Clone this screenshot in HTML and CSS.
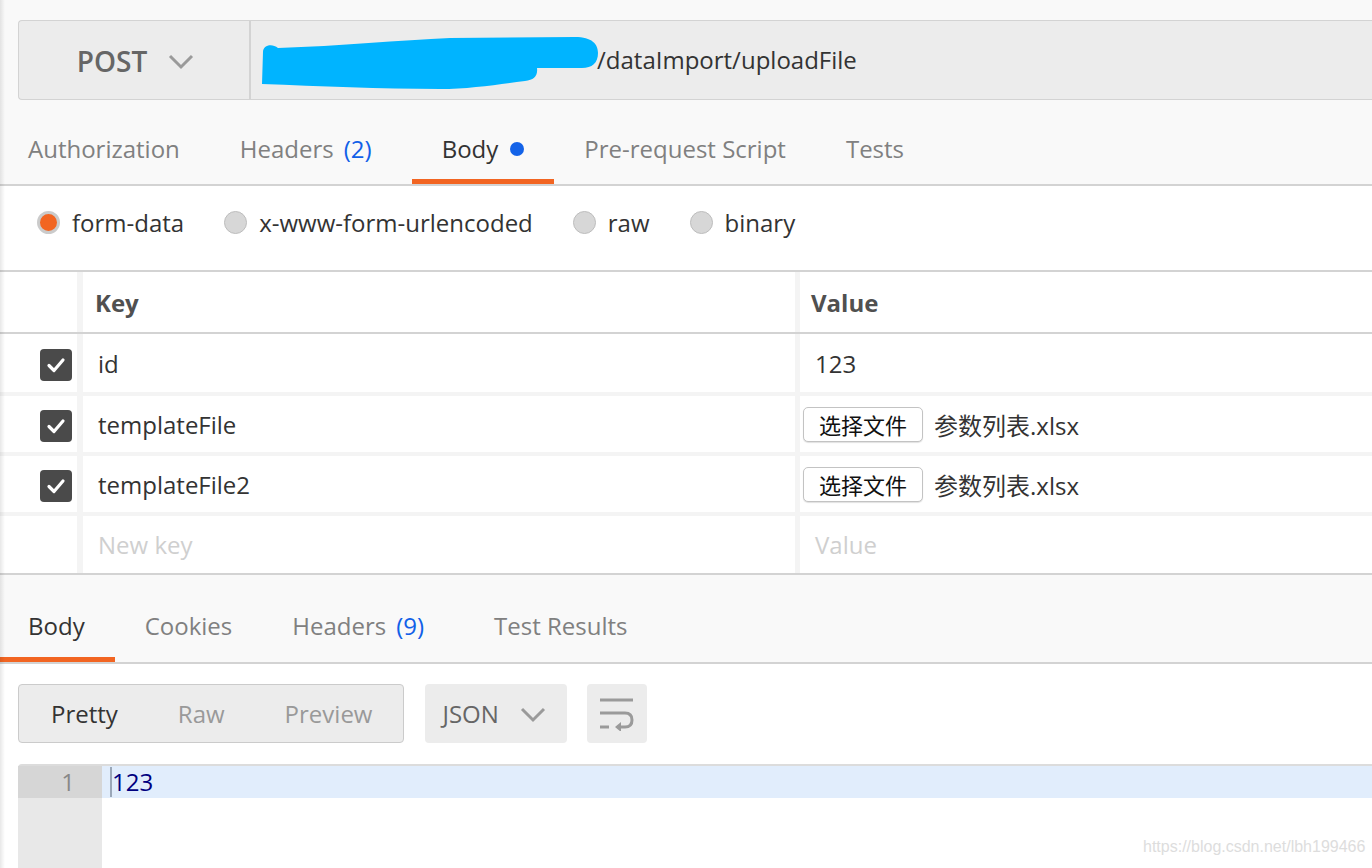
FILE: index.html
```html
<!DOCTYPE html>
<html lang="zh">
<head>
<meta charset="utf-8">
<title>Postman</title>
<link rel="stylesheet" href="styles.css">
</head>
<body>
<div class="app">
  <div class="request-bar">
    <div class="urlbox">
      <div class="method">
        <span class="method-name">POST</span>
        <svg class="chev" width="26" height="16" viewBox="0 0 26 16"><polyline points="2,2 13,13 24,2" fill="none" stroke="#9a9a9a" stroke-width="3"/></svg>
      </div>
      <div class="url">
        <svg class="scribble" width="360" height="78" viewBox="251 21 360 78"><path d="M263 52 C263 45 272 43 278 48 C340 46 400 40 450 38 L575 37 C592 37 598 44 598 53 C598 63 592 68 582 68 L537 68 C538 76 534 80 525 81 C500 84 470 89 440 89 C380 89 320 86 262 84 Z" fill="#00b4ff"/></svg>
        <span class="url-text">/dataImport/uploadFile</span>
      </div>
    </div>
  </div>

  <div class="tabs req-tabs">
    <div class="tab">Authorization</div>
    <div class="tab">Headers<span class="count">(2)</span></div>
    <div class="tab active">Body<span class="dot"></span></div>
    <div class="tab">Pre-request Script</div>
    <div class="tab">Tests</div>
  </div>

  <div class="body-types">
    <label class="opt"><span class="radio checked"></span>form-data</label>
    <label class="opt"><span class="radio"></span>x-www-form-urlencoded</label>
    <label class="opt"><span class="radio"></span>raw</label>
    <label class="opt"><span class="radio"></span>binary</label>
  </div>

  <div class="kv">
    <div class="kv-row kv-head">
      <div class="c-check"></div>
      <div class="c-key">Key</div>
      <div class="c-val">Value</div>
    </div>
    <div class="kv-row">
      <div class="c-check"><span class="cb"><svg width="32" height="32" viewBox="0 0 32 32"><polyline points="9,16.5 14,21.5 23,11" fill="none" stroke="#fff" stroke-width="3.2" stroke-linecap="round" stroke-linejoin="round"/></svg></span></div>
      <div class="c-key">id</div>
      <div class="c-val">123</div>
    </div>
    <div class="kv-row">
      <div class="c-check"><span class="cb"><svg width="32" height="32" viewBox="0 0 32 32"><polyline points="9,16.5 14,21.5 23,11" fill="none" stroke="#fff" stroke-width="3.2" stroke-linecap="round" stroke-linejoin="round"/></svg></span></div>
      <div class="c-key">templateFile</div>
      <div class="c-val file"><span class="file-btn">选择文件</span><span class="file-name">参数列表.xlsx</span></div>
    </div>
    <div class="kv-row">
      <div class="c-check"><span class="cb"><svg width="32" height="32" viewBox="0 0 32 32"><polyline points="9,16.5 14,21.5 23,11" fill="none" stroke="#fff" stroke-width="3.2" stroke-linecap="round" stroke-linejoin="round"/></svg></span></div>
      <div class="c-key">templateFile2</div>
      <div class="c-val file"><span class="file-btn">选择文件</span><span class="file-name">参数列表.xlsx</span></div>
    </div>
    <div class="kv-row last">
      <div class="c-check"></div>
      <div class="c-key placeholder">New key</div>
      <div class="c-val placeholder">Value</div>
    </div>
  </div>

  <div class="tabs resp-tabs">
    <div class="tab active">Body</div>
    <div class="tab">Cookies</div>
    <div class="tab">Headers<span class="count">(9)</span></div>
    <div class="tab">Test Results</div>
  </div>

  <div class="resp-body">
    <div class="toolbar">
      <div class="seg">
        <span class="seg-item on">Pretty</span>
        <span class="seg-item">Raw</span>
        <span class="seg-item">Preview</span>
      </div>
      <div class="select">
        <span>JSON</span>
        <svg width="26" height="16" viewBox="0 0 26 16"><polyline points="2,2 13,13 24,2" fill="none" stroke="#9a9a9a" stroke-width="3"/></svg>
      </div>
      <div class="wrap-btn">
        <svg width="34" height="34" viewBox="0 0 34 34"><g fill="none" stroke="#9a9a9a" stroke-width="3"><path d="M0 3 H33"/><path d="M0 16 H25 C30 16 32 19 32 23 C32 27 30 30 25 30 H18"/><path d="M0 30 H9"/></g><path d="M21 25 L15 30 L21 35 Z" fill="#9a9a9a"/></svg>
      </div>
    </div>
    <div class="editor">
      <div class="gutter"><div class="ln active">1</div></div>
      <div class="code"><div class="line active"><span class="cursor"></span>123</div></div>
    </div>
  </div>

  <div class="watermark">https://blog.csdn.net/lbh199466</div>
</div>
</body>
</html>
```

FILE: styles.css
```css
html, body {
  margin: 0;
  padding: 0;
}
body {
  width: 1372px;
  height: 868px;
  overflow: hidden;
  background: #f9f9f9;
  font-family: "Open Sans", "Noto Sans CJK SC", sans-serif;
  font-size: 24px;
  color: #333;
}
.app {
  position: relative;
  height: 868px;
}
.app::before {
  content: "";
  position: absolute;
  left: 0;
  top: 0;
  bottom: 0;
  width: 5px;
  background: linear-gradient(to right, rgba(0,0,0,0.09), rgba(0,0,0,0));
  z-index: 5;
  pointer-events: none;
}

/* request bar */
.request-bar {
  padding: 20px 0 0 18px;
  height: 100px;
  box-sizing: border-box;
}
.urlbox {
  display: flex;
  height: 80px;
  box-sizing: border-box;
  border: 1px solid #d3d3d3;
  border-right: none;
  border-radius: 4px 0 0 4px;
  background: #ececec;
}
.method {
  width: 232px;
  box-sizing: border-box;
  border-right: 2px solid #d3d3d3;
  display: flex;
  align-items: center;
  justify-content: center;
  gap: 21px;
  padding-top: 2px;
  padding-left: 3px;
}
.method-name {
  font-size: 28px;
  font-weight: 600;
  color: #666;
}
.chev {
  margin-top: 2px;
}
.url {
  position: relative;
  flex: 1;
  display: flex;
  align-items: center;
  padding-left: 346px;
  padding-bottom: 2px;
}
.scribble {
  position: absolute;
  left: 0;
  top: 0;
  z-index: 1;
}
.url-text {
  position: relative;
  z-index: 0;
  color: #333;
}

/* tabs */
.tabs {
  display: flex;
  box-sizing: border-box;
  border-bottom: 2px solid #d3d3d3;
  background: #f9f9f9;
}
.tab {
  display: flex;
  align-items: center;
  padding: 0 30px;
  box-sizing: border-box;
  border-bottom: 5px solid transparent;
  color: #808080;
  white-space: nowrap;
}
.tab:first-child {
  padding-left: 28px;
}
.tab.active {
  color: #333;
  border-bottom-color: #f26522;
}
.req-tabs {
  height: 86px;
}
.req-tabs .tab {
  height: 84px;
  padding-top: 17px;
}
.resp-tabs {
  height: 89px;
}
.resp-tabs .tab {
  height: 87px;
  padding-top: 18px;
}
.count {
  color: #1160e8;
  margin-left: 10px;
  margin-right: 10px;
}
.dot {
  width: 14px;
  height: 14px;
  border-radius: 50%;
  background: #1463e8;
  margin-left: 12px;
  margin-top: 2px;
}

/* body type radios */
.body-types {
  height: 86px;
  box-sizing: border-box;
  background: #fff;
  border-bottom: 2px solid #d3d3d3;
  display: flex;
  align-items: center;
  padding: 0 0 12px 37px;
  gap: 40px;
}
.opt {
  display: flex;
  align-items: center;
  gap: 12px;
}
.radio {
  width: 23px;
  height: 23px;
  box-sizing: border-box;
  border-radius: 50%;
  background: #d7d7d7;
  border: 1px solid #bdbdbd;
}
.radio.checked {
  background: #f26522;
  border: 3px solid #cbcbcb;
}

/* key-value table */
.kv {
  background: #fff;
}
.kv-row {
  display: flex;
  height: 56px;
  border-bottom: 4px solid #f4f4f4;
}
.kv-row.kv-head {
  height: 60px;
  border-bottom: 2px solid #d3d3d3;
  font-weight: 700;
  color: #505050;
}
.kv-head + .kv-row {
  height: 58px;
}
.kv-row.last {
  height: 57px;
  border-bottom: 2px solid #d3d3d3;
}
.c-check {
  width: 77px;
  display: flex;
  align-items: center;
  padding-left: 40px;
  box-sizing: border-box;
}
.c-key {
  width: 718px;
  box-sizing: border-box;
  border-left: 6px solid #f4f4f4;
  display: flex;
  align-items: center;
  padding-left: 15px;
}
.c-val {
  flex: 1;
  box-sizing: border-box;
  border-left: 5px solid #f4f4f4;
  display: flex;
  align-items: center;
  padding-left: 15px;
}
.kv-head .c-key { padding-left: 12px; }
.kv-head .c-val { padding-left: 11px; }
.c-val.file {
  padding-left: 3px;
}
.placeholder {
  color: #cfcfcf;
}
.cb {
  width: 32px;
  height: 32px;
  border-radius: 4px;
  background: #4a4a4a;
  display: block;
  margin-top: 3px;
}
.cb svg { display: block; }
.file-btn {
  height: 35px;
  box-sizing: border-box;
  padding: 0 15px;
  border: 1px solid #c3c3c3;
  border-radius: 5px;
  background: #fff;
  box-shadow: 0 1px 1px rgba(0,0,0,0.12);
  font-family: "Noto Sans CJK SC", sans-serif;
  font-size: 22px;
  line-height: 33px;
  color: #111;
}
.file-name {
  margin-left: 11px;
  color: #333;
}

/* response */
.resp-body {
  background: #fff;
  height: 204px;
}
.toolbar {
  display: flex;
  padding: 20px 0 0 18px;
  gap: 21px;
  height: 79px;
  box-sizing: border-box;
}
.seg {
  display: flex;
  align-items: center;
  height: 59px;
  box-sizing: border-box;
  border: 1px solid #cbcbcb;
  border-radius: 4px;
  background: #ececec;
  padding: 0 1px 0 2px;
}
.seg-item {
  padding: 0 30px;
  color: #999;
}
.seg-item.on {
  color: #333;
}
.select {
  display: flex;
  align-items: center;
  gap: 21px;
  height: 59px;
  padding: 0 21px 0 17px;
  border-radius: 4px;
  background: #ececec;
  color: #666;
}
.select svg { margin-top: 2px; }
.wrap-btn {
  width: 60px;
  height: 59px;
  border-radius: 4px;
  background: #ececec;
  display: flex;
  align-items: center;
  justify-content: center;
  margin-left: -1px;
}
.editor {
  display: flex;
  margin: 21px 0 0 18px;
  height: 104px;
  border-top: 2px solid #dcdcdc;
  border-top-left-radius: 4px;
}
.gutter {
  width: 84px;
  background: #e8e8e8;
}
.ln {
  height: 32px;
  line-height: 32px;
  text-align: right;
  padding-right: 27px;
  color: #888;
}
.ln.active {
  background: #d6d6d6;
}
.code {
  flex: 1;
}
.line {
  height: 32px;
  line-height: 32px;
  padding-left: 8px;
  color: #000080;
  display: flex;
  align-items: center;
}
.line.active {
  background: #e1edfc;
}
.cursor {
  width: 2px;
  height: 30px;
  background: #9aa7b8;
}
.watermark {
  position: absolute;
  left: 1143px;
  top: 838px;
  font-family: "Liberation Sans", Arial, sans-serif;
  font-size: 16px;
  color: #dddddd;
  z-index: 6;
}
```
